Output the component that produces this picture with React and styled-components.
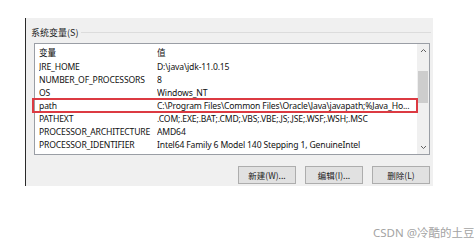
import React from "react";
import styled, { createGlobalStyle } from "styled-components";

const Global = createGlobalStyle`
  html, body { margin: 0; padding: 0; background: #fff; }
  body { width: 474px; height: 244px; overflow: hidden; font-family: "Noto Sans", "Noto Sans CJK SC", sans-serif; }
`;

const Page = styled.div`
  position: relative;
  width: 474px;
  height: 244px;
  padding: 18px 0 0 25px;
  box-sizing: border-box;
`;

const Panel = styled.div`
  width: 408px;
  height: 168px;
  box-sizing: border-box;
  background: #f0f0f0;
  border-left: 1px solid #2a2a2a;
  display: flex;
  flex-direction: column;
`;

const TitleRow = styled.div`
  height: 25px;
  display: flex;
  align-items: center;
  gap: 3px;
  padding: 4px 2px 0 5px;
  box-sizing: border-box;
`;

const Title = styled.span`
  font-size: 9px;
  color: #1a1a1a;
  font-family: "Noto Sans CJK SC", sans-serif;
  white-space: nowrap;
`;

const Rule = styled.div`
  flex: 1;
  height: 1px;
  background: #dcdcdc;
`;

const ListBox = styled.div`
  position: relative;
  margin: 0 0 0 8px;
  width: 396px;
  height: 112px;
  box-sizing: border-box;
  border: 1px solid #9a9ea5;
  background: #fff;
  display: flex;
`;

const Rows = styled.div`
  flex: 1;
  overflow: hidden;
  padding-left: 4px;
`;

const Row = styled.div`
  display: grid;
  grid-template-columns: 118px 1fr;
  height: ${(p) => (p.$header ? 16 : 13)}px;
  align-items: center;
  font-size: 8.6px;
  letter-spacing: -0.15px;
  color: #111;
  white-space: nowrap;
  overflow: hidden;
`;

const Cell = styled.span`
  overflow: hidden;
  font-family: ${(p) => (p.$cjk ? '"Noto Sans CJK SC", sans-serif' : '"Noto Sans", sans-serif')};
`;

const Scroll = styled.div`
  width: 12px;
  background: #f0f0f0;
  display: flex;
  flex-direction: column;
  align-items: center;
`;

const Arrow = styled.div`
  height: 13px;
  display: flex;
  align-items: center;
  justify-content: center;
`;

const Track = styled.div`
  flex: 1;
  width: 100%;
  display: flex;
  flex-direction: column;
  align-items: center;
  padding-top: 14px;
`;

const Thumb = styled.div`
  width: 10px;
  height: 32px;
  background: #cdcdcd;
`;

const Highlight = styled.div`
  position: absolute;
  left: -3px;
  top: 54px;
  width: 386px;
  height: 15px;
  box-sizing: border-box;
  border: 2px solid #dc3a42;
  pointer-events: none;
`;

const Buttons = styled.div`
  display: flex;
  justify-content: flex-end;
  gap: 9px;
  padding: 11px 3px 0 0;
`;

const Button = styled.div`
  width: 58px;
  height: 18px;
  box-sizing: border-box;
  background: #e1e1e1;
  border: 1px solid #adadad;
  display: flex;
  align-items: center;
  justify-content: center;
  font-size: 8.5px;
  font-family: "Noto Sans CJK SC", sans-serif;
  color: #1a1a1a;
`;

const Watermark = styled.div`
  position: absolute;
  left: 373px;
  top: 224px;
  font-size: 11.5px;
  color: #a3a3a3;
  font-family: "Noto Sans", "Noto Sans CJK SC", sans-serif;
  white-space: nowrap;
`;

const Chevron = ({ up }) => (
  <svg width="7" height="5" viewBox="0 0 7 5">
    <path
      d={up ? "M1 4 L3.5 1.5 L6 4" : "M1 1 L3.5 3.5 L6 1"}
      fill="none"
      stroke="#606060"
      strokeWidth="1"
    />
  </svg>
);

const data = [
  ["JRE_HOME", "D:\\java\\jdk-11.0.15"],
  ["NUMBER_OF_PROCESSORS", "8"],
  ["OS", "Windows_NT"],
  ["path", "C:\\Program Files\\Common Files\\Oracle\\Java\\javapath;%Java_Ho..."],
  ["PATHEXT", ".COM;.EXE;.BAT;.CMD;.VBS;.VBE;.JS;.JSE;.WSF;.WSH;.MSC"],
  ["PROCESSOR_ARCHITECTURE", "AMD64"],
  ["PROCESSOR_IDENTIFIER", "Intel64 Family 6 Model 140 Stepping 1, GenuineIntel"],
  ["PROCESSOR_LEVEL", "6"],
];

export default function App() {
  return (
    <>
      <Global />
      <Page>
        <Panel>
          <TitleRow>
            <Title>系统变量(S)</Title>
            <Rule />
          </TitleRow>
          <ListBox>
            <Rows>
              <Row $header>
                <Cell $cjk>变量</Cell>
                <Cell $cjk>值</Cell>
              </Row>
              {data.map(([k, v]) => (
                <Row key={k}>
                  <Cell>{k}</Cell>
                  <Cell>{v}</Cell>
                </Row>
              ))}
            </Rows>
            <Scroll>
              <Arrow><Chevron up /></Arrow>
              <Track><Thumb /></Track>
              <Arrow><Chevron /></Arrow>
            </Scroll>
            <Highlight />
          </ListBox>
          <Buttons>
            <Button>新建(W)...</Button>
            <Button>编辑(I)...</Button>
            <Button>删除(L)</Button>
          </Buttons>
        </Panel>
        <Watermark>CSDN @冷酷的土豆</Watermark>
      </Page>
    </>
  );
}
